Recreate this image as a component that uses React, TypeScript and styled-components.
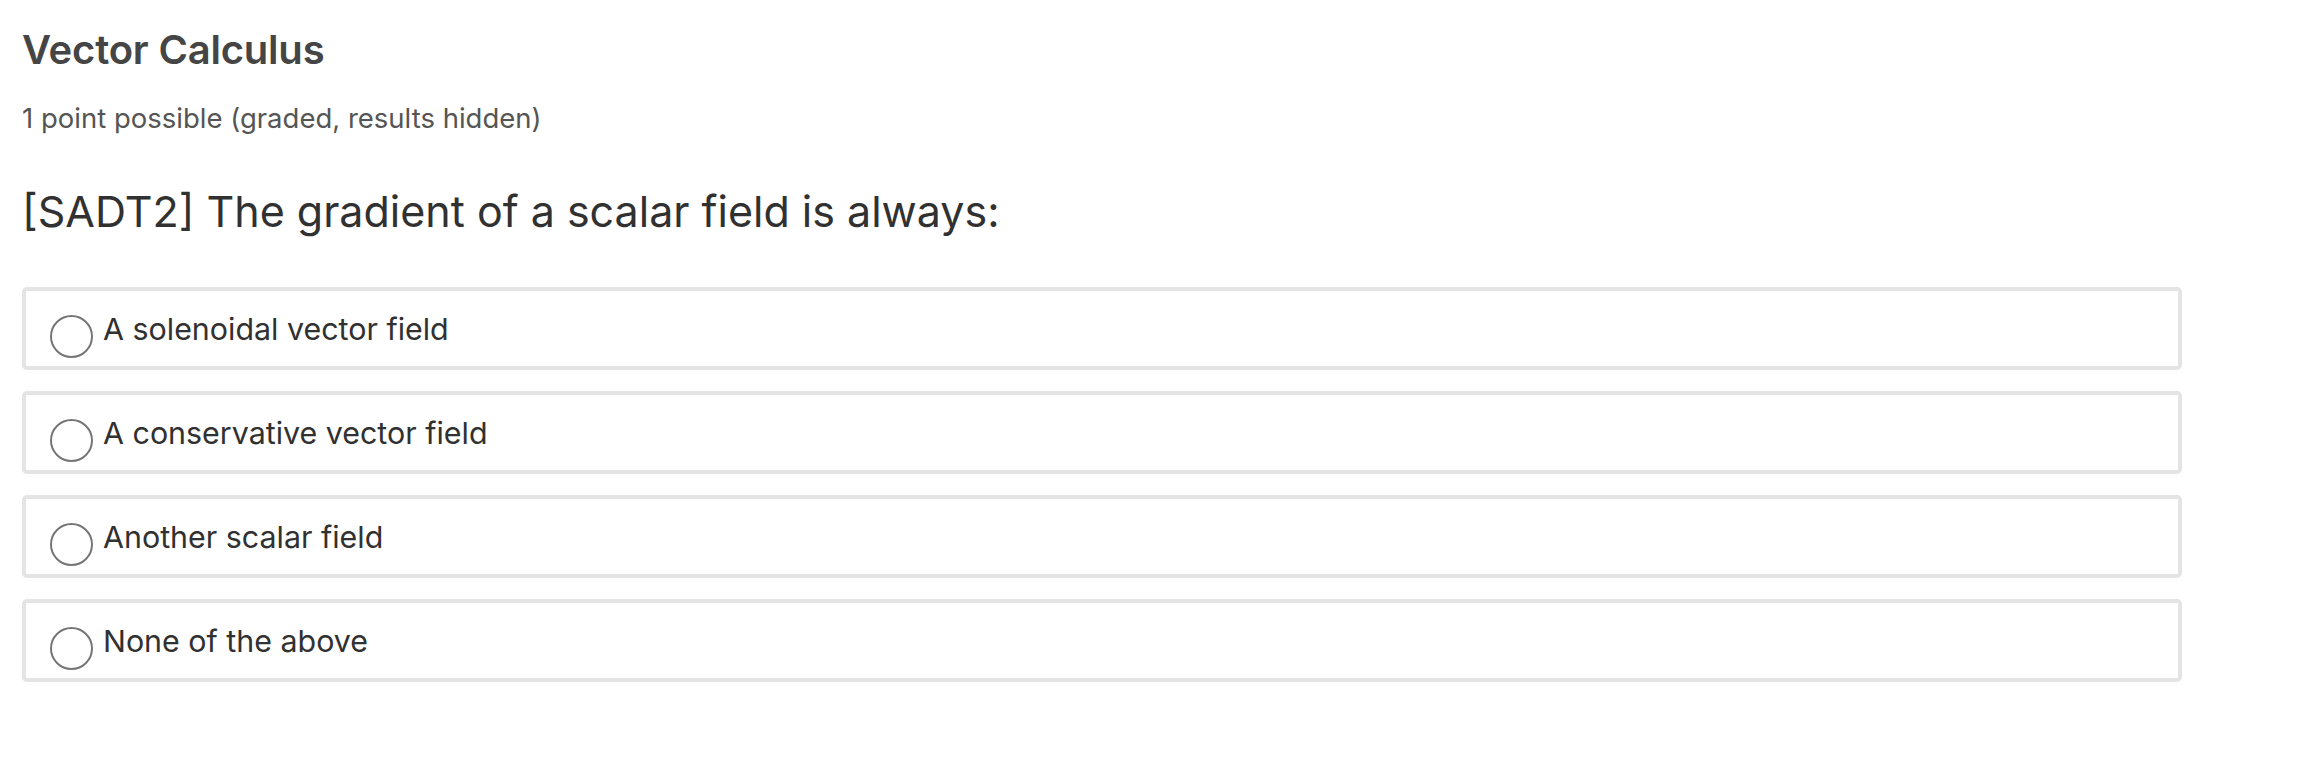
import React from 'react';
import styled, { createGlobalStyle } from 'styled-components';

const GlobalStyle = createGlobalStyle`
    html, body {
        margin: 0;
        padding: 0;
        background: #ffffff;
    }
    body {
        font-family: Inter, "Open Sans", "Liberation Sans", sans-serif;
        color: #313131;
    }
`;

const Page = styled.div`
    padding: 24px 116px 0 22px;
    box-sizing: border-box;
    width: 100%;
`;

const Title = styled.h2`
    margin: 0;
    font-size: 40px;
    line-height: 52px;
    font-weight: 600;
    color: #454545;
    letter-spacing: -0.2px;
`;

const Meta = styled.div`
    margin-top: 24px;
    font-size: 27.5px;
    line-height: 36px;
    color: #555555;
`;

const Question = styled.h3`
    margin: 47px 0 0;
    font-size: 43px;
    line-height: 56px;
    font-weight: 400;
    color: #313131;
`;

const Choices = styled.fieldset`
    margin: 48px 0 0;
    padding: 0;
    border: 0;
    display: flex;
    flex-direction: column;
    gap: 21px;
`;

const Choice = styled.label`
    display: flex;
    align-items: center;
    height: 83px;
    box-sizing: border-box;
    padding: 0 24px;
    border: 4px solid #e4e4e4;
    border-radius: 5px;
    cursor: pointer;
`;

const Radio = styled.span`
    flex: none;
    width: 43px;
    height: 43px;
    box-sizing: border-box;
    border: 2px solid #767676;
    border-radius: 50%;
    margin: 16px 10px 0 0;
    background: #ffffff;
`;

const ChoiceText = styled.span`
    font-size: 30.4px;
    line-height: 40px;
    color: #313131;
`;

const options = [
    'A solenoidal vector field',
    'A conservative vector field',
    'Another scalar field',
    'None of the above',
];

export default function App() {
    return (
        <>
            <GlobalStyle />
            <Page>
                <Title>Vector Calculus</Title>
                <Meta>1 point possible (graded, results hidden)</Meta>
                <Question>[SADT2] The gradient of a scalar field is always:</Question>
                <Choices>
                    {options.map(option => (
                        <Choice key={option}>
                            <Radio />
                            <ChoiceText>{option}</ChoiceText>
                        </Choice>
                    ))}
                </Choices>
            </Page>
        </>
    );
}
